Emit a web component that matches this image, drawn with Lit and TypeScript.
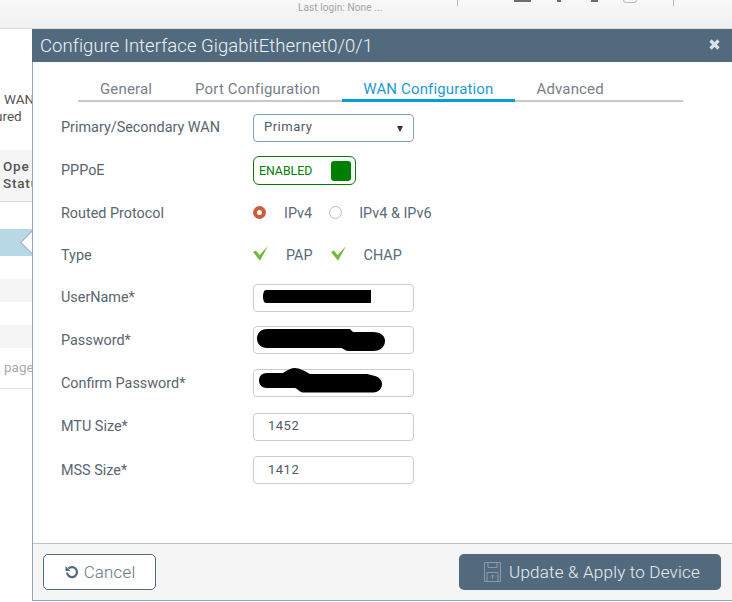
import { LitElement, html, css } from "lit";
import { customElement } from "lit/decorators.js";

@customElement("app-root")
export class AppRoot extends LitElement {
  static styles = css`
    :host { display: block; width: 732px; height: 602px; overflow: hidden; font-family: Roboto, "Liberation Sans", sans-serif; background: #fff; position: relative; }
    .top { height: 29px; background: linear-gradient(#f8f8f8, #efefef); border-bottom: 1px solid #ddd; box-sizing: border-box; display: flex; align-items: flex-start; padding-left: 298px; }
    .login { width: 159px; flex: none; margin-top: 2px; font-size: 10px; line-height: 12px; color: #a3a3a3; letter-spacing: .1px; }
    .tools { display: flex; align-items: flex-start; width: 217px; height: 6px; flex: none; border-left: 1px solid #bbb; border-right: 1px solid #bbb; box-sizing: border-box; }
    .tool { background: #6e6e6e; height: 2px; }
    .t1 { width: 17px; margin-left: 56px; }
    .t2 { width: 4px; margin-left: 26px; }
    .t3 { width: 7px; margin-left: 30px; }
    .t4 { width: 14px; height: 3px; margin-left: 25px; background: none; border: 1px solid #bbb; border-top: none; border-radius: 0 0 7px 7px; box-sizing: border-box; }

    .back { width: 32px; height: 573px; overflow: hidden; font-size: 13.5px; color: #555; display: flex; flex-direction: column; position: relative; box-sizing: border-box; padding-top: 61px; line-height: 18px; white-space: nowrap; }
    .wan { margin-left: 4px; }
    .ured { margin: -1px 0 0 -5px; }
    .hd { height: 52px; margin-top: 25px; background: #f5f5f5; border-bottom: 1px solid #ddd; box-sizing: border-box; padding: 8px 0 0 3px; font-weight: 500; color: #555; letter-spacing: .8px; line-height: 17px; flex: none; }
    .sel { height: 27px; margin-top: 27px; background: #b7d8e5; flex: none; }
    .z1 { height: 23px; margin-top: 23px; background: #f5f5f5; flex: none; }
    .z2 { height: 23px; margin-top: 23px; background: #f5f5f5; flex: none; }
    .pg { margin: 10px 0 0 4px; color: #aaa; }
    .ln { height: 1px; margin-top: 12px; background: #ddd; flex: none; }
    .notch { position: absolute; left: 24px; top: 204px; width: 19px; height: 19px; background: #fff; border: 1px solid #8ea6bd; transform: rotate(45deg); box-sizing: border-box; }

    .modal { position: absolute; left: 32px; top: 29px; width: 700px; height: 572px; box-sizing: border-box; border-left: 1px solid #8ea6bd; border-bottom: 1px solid #8ea6bd; display: flex; flex-direction: column; background: #fff; }
    .title { height: 33px; flex: none; background: #526a7e; color: #eef2f5; font-size: 18.5px; font-weight: 300; display: flex; align-items: center; padding-left: 8px; margin-left: -1px; position: relative; letter-spacing: .05px; }
    .x { position: absolute; left: 676px; top: 9px; width: 13px; height: 13px; }
    .body { flex: 1; }
    .tabs { display: flex; margin: 8px 0 0 45px; width: 605px; padding-left: .5px; border-bottom: 2px solid #c8c8c8; height: 32px; box-sizing: border-box; font-size: 15px; color: #76818a; letter-spacing: .15px; }
    .tab { padding: 10px 21.5px 0; box-sizing: border-box; height: 32px; white-space: nowrap; }
    .tab.on { color: #1c9ad6; border-bottom: 3px solid #049fd9; }
    .form { padding: 4px 0 0 28px; display: flex; flex-direction: column; font-size: 14.4px; color: #5a6570; }
    .row { display: flex; align-items: center; height: 43px; flex: none; }
    .row.h41 { height: 41px; }
    .row.h42 { height: 42px; }
    .row.h44 { height: 44px; }
    .label { width: 192px; flex: none; }
    .ctrl { display: flex; align-items: center; color: #5a6a78; }
    .input { width: 161px; height: 28px; box-sizing: border-box; border: 1px solid #ccc; border-radius: 4px; font-size: 13px; color: #4d5b66; padding: 0 0 2px 14px; display: flex; align-items: center; position: relative; letter-spacing: .5px; }
    .select { border-color: #7ea3b8; padding-left: 10px; justify-content: space-between; padding-right: 10px; }
    .tri { width: 0; height: 0; border-left: 3.5px solid transparent; border-right: 3.5px solid transparent; border-top: 6px solid #333; margin-top: 4px; }
    .toggle { width: 103px; height: 29px; border: 1px solid #008000; border-radius: 6px; box-sizing: border-box; display: flex; align-items: center; justify-content: space-between; padding: 0 4px 0 5px; color: #008000; font-size: 12.3px; }
    .knob { width: 20px; height: 20px; background: #008000; border-radius: 3px; }
    .radio { width: 13px; height: 13px; border-radius: 50%; box-sizing: border-box; flex: none; margin-top: -3px; }
    .radio.on { background: #fff; border: 4px solid #c9603b; }
    .radio.off { border: 1px solid #bbb; }
    .ropt { margin: 0 17px 0 18px; }
    .ropt2 { margin-left: 17px; }
    .opt { margin-left: 18px; margin-right: 18px; }
    .opt2 { margin-left: 18px; }
    .check { flex: none; margin-top: -4px; }
    .redact { position: absolute; left: -1px; top: -1px; overflow: visible; }

    .footer { height: 57px; flex: none; border-top: 1px solid #bcc4cb; background: #f5f5f5; display: flex; align-items: center; justify-content: space-between; padding: 0 11px 0 10px; box-sizing: border-box; }
    .btn { height: 36px; box-sizing: border-box; border-radius: 5px; display: flex; align-items: center; justify-content: center; font-size: 17px; gap: 4px; letter-spacing: .2px; font-weight: 300; }
    .cancel { width: 113px; background: #fff; border: 1px solid #526a7e; color: #5f7586; font-size: 16.9px; }
    .apply { width: 262px; background: #526a7e; color: #e8eef2; gap: 8px; padding-left: 4px; }
  `;

  render() {
    return html`
      <div class="top">
        <div class="login">Last login: None ...</div>
        <div class="tools"><span class="tool t1"></span><span class="tool t2"></span><span class="tool t3"></span><span class="tool t4"></span></div>
      </div>
      <div class="back">
        <div class="wan">WAN</div>
        <div class="ured">ured</div>
        <div class="hd">Ope<br />Statu</div>
        <div class="sel"></div>
        <div class="z1"></div>
        <div class="z2"></div>
        <div class="pg">page</div>
        <div class="ln"></div>
        <div class="notch"></div>
      </div>
      <div class="modal">
        <div class="title">Configure Interface GigabitEthernet0/0/1
          <svg class="x" viewBox="0 0 13 13"><path d="M2.5 2.5l8 8M10.5 2.5l-8 8" stroke="#dbe3e9" stroke-width="3.2" /></svg>
        </div>
        <div class="body">
          <div class="tabs">
            <div class="tab">General</div>
            <div class="tab">Port Configuration</div>
            <div class="tab on">WAN Configuration</div>
            <div class="tab">Advanced</div>
          </div>
          <div class="form">
            <div class="row"><div class="label">Primary/Secondary WAN</div><div class="ctrl"><div class="input select"><span>Primary</span><span class="tri"></span></div></div></div>
            <div class="row"><div class="label">PPPoE</div><div class="ctrl"><div class="toggle"><span>ENABLED</span><span class="knob"></span></div></div></div>
            <div class="row"><div class="label">Routed Protocol</div><div class="ctrl"><span class="radio on"></span><span class="ropt">IPv4</span><span class="radio off"></span><span class="ropt2">IPv4 &amp; IPv6</span></div></div>
            <div class="row h41"><div class="label">Type</div><div class="ctrl">${this.check()}<span class="opt">PAP</span>${this.check()}<span class="opt2">CHAP</span></div></div>
            <div class="row"><div class="label">UserName*</div><div class="ctrl"><div class="input"><svg class="redact" width="161" height="28"><path d="M13 6H118V19H13C11 19 10 16 10 12.5S11 6 13 6z" fill="#000"/></svg></div></div></div>
            <div class="row h42"><div class="label">Password*</div><div class="ctrl"><div class="input"><svg class="redact" width="161" height="28"><path d="M14 3H97L100 6H120C128 6 132 10 132 15S128 25 120 25H95C92 25 90 22 88 22H14C8 22 4 18 4 12.5S8 3 14 3z" fill="#000"/></svg></div></div></div>
            <div class="row h44"><div class="label">Confirm Password*</div><div class="ctrl"><div class="input"><svg class="redact" width="161" height="28"><path d="M14 4H30C34 1 38 -1 42 -1S52 2 57 5H114L122 7C126 8 129 11 129 15S126 23.5 120 23.5H50C47 23.5 45 20 42 19H14C9 19 6 16 6 11.5S9 4 14 4z" fill="#000"/></svg></div></div></div>
            <div class="row"><div class="label">MTU Size*</div><div class="ctrl"><div class="input">1452</div></div></div>
            <div class="row h44"><div class="label">MSS Size*</div><div class="ctrl"><div class="input">1412</div></div></div>
          </div>
        </div>
        <div class="footer">
          <div class="btn cancel"><svg width="16" height="16" viewBox="0 0 16 16"><path d="M4.5 4.5A5 5 0 1 1 3 8.5" fill="none" stroke="#526a7e" stroke-width="2.2"/><path d="M1.5 2v5h5z" fill="#526a7e"/></svg>Cancel</div>
          <div class="btn apply"><svg width="17" height="20" viewBox="0 0 17 20" fill="none" stroke="#8d9aa5"><path d="M.5.5h16v19H.5zM4 .5v5h9v-5M3 19.5v-9h11v9"/><path d="M8.5 17v-4M7 14.5L8.5 13l1.5 1.5"/></svg>Update &amp; Apply to Device</div>
        </div>
      </div>
    `;
  }

  check() {
    return html`<svg class="check" width="15" height="15" viewBox="0 0 15 15"><path d="M0 6L3 4.5 6.5 9 15 0 7 14.7z" fill="#79b63a"/></svg>`;
  }
}
